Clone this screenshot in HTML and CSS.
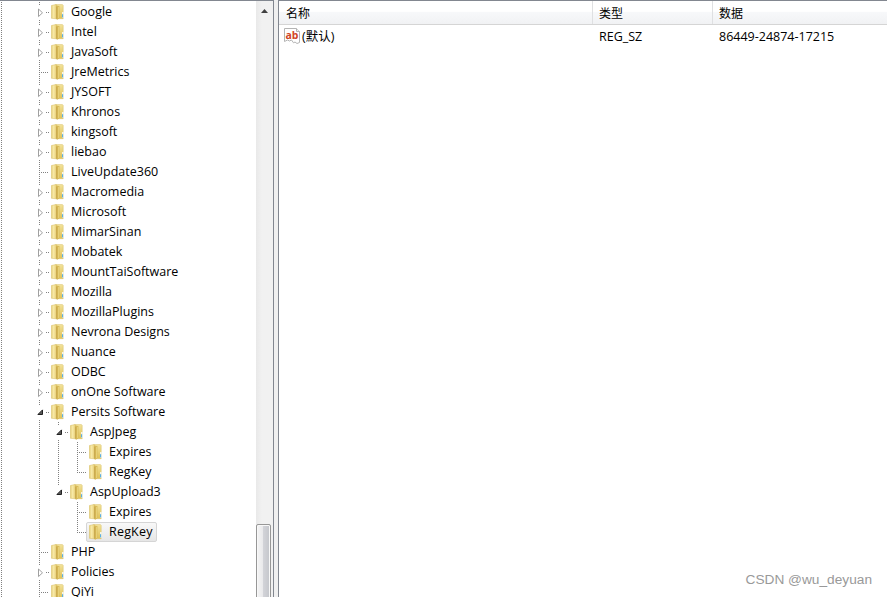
FILE: index.html
```
<!DOCTYPE html>
<html lang="zh-CN">
<head>
    <meta charset="UTF-8">
    <title>Registry Editor</title>
    <link rel="stylesheet" href="styles.css">
</head>
<body>
    <svg class="defs" width="0" height="0">
        <defs>
            <linearGradient id="folderLeft" x1="0" x2="1" y1="0" y2="0">
                <stop offset="0" stop-color="#e6d07a"/>
                <stop offset="0.4" stop-color="#f8eaa9"/>
                <stop offset="1" stop-color="#e2c668"/>
            </linearGradient>
            <linearGradient id="folderRight" x1="0" x2="0" y1="0" y2="1">
                <stop offset="0" stop-color="#f2e29b"/>
                <stop offset="1" stop-color="#dfc156"/>
            </linearGradient>
            <symbol id="folder" viewBox="0 0 14 16">
                <path d="M5 .4h6.3l.9.9v13.4H5z" fill="url(#folderRight)" stroke="#d9c06a" stroke-width=".5"/>
                <path d="M.4 1.6 5 .4l1 1.4v13L.4 14.3z" fill="url(#folderLeft)" stroke="#d6bc62" stroke-width=".5"/>
                <path d="M5 1.8 8.4 2v12l-2 1.8L5 14.6z" fill="#d6b855"/>
                <path d="M5.6 3v11.5" stroke="#c8a850" stroke-width=".9"/>
                <path d="M7.6 2.8v11.2" stroke="#ecd988" stroke-width=".8"/>
                <path d="M11 8h1.8v5.8H11z" fill="#f6f4e4"/>
                <path d="M11.6 10.2v3.2" stroke="#4ba8e2" stroke-width="1"/>
            </symbol>
            <symbol id="closed" viewBox="0 0 7 10">
                <path d="M1.5 1v7.6l4-3.8z" fill="#fff" stroke="#a0a0a0"/>
            </symbol>
            <symbol id="open" viewBox="0 0 7 7">
                <path d="M5.5.9v4.6H.9z" fill="#595959" stroke="#222"/>
            </symbol>
        </defs>
    </svg>

    <div class="window">
        <div class="tree-pane">
            <div class="tree">
                <div class="row"><i class="node"><svg class="closed"><use href="#closed"/></svg></i><span class="item"><svg><use href="#folder"/></svg>Google</span></div>
                <div class="row"><i class="node"><svg class="closed"><use href="#closed"/></svg></i><span class="item"><svg><use href="#folder"/></svg>Intel</span></div>
                <div class="row"><i class="node"><svg class="closed"><use href="#closed"/></svg></i><span class="item"><svg><use href="#folder"/></svg>JavaSoft</span></div>
                <div class="row"><i class="tee"></i><span class="item"><svg><use href="#folder"/></svg>JreMetrics</span></div>
                <div class="row"><i class="node"><svg class="closed"><use href="#closed"/></svg></i><span class="item"><svg><use href="#folder"/></svg>JYSOFT</span></div>
                <div class="row"><i class="node"><svg class="closed"><use href="#closed"/></svg></i><span class="item"><svg><use href="#folder"/></svg>Khronos</span></div>
                <div class="row"><i class="node"><svg class="closed"><use href="#closed"/></svg></i><span class="item"><svg><use href="#folder"/></svg>kingsoft</span></div>
                <div class="row"><i class="node"><svg class="closed"><use href="#closed"/></svg></i><span class="item"><svg><use href="#folder"/></svg>liebao</span></div>
                <div class="row"><i class="tee"></i><span class="item"><svg><use href="#folder"/></svg>LiveUpdate360</span></div>
                <div class="row"><i class="node"><svg class="closed"><use href="#closed"/></svg></i><span class="item"><svg><use href="#folder"/></svg>Macromedia</span></div>
                <div class="row"><i class="node"><svg class="closed"><use href="#closed"/></svg></i><span class="item"><svg><use href="#folder"/></svg>Microsoft</span></div>
                <div class="row"><i class="node"><svg class="closed"><use href="#closed"/></svg></i><span class="item"><svg><use href="#folder"/></svg>MimarSinan</span></div>
                <div class="row"><i class="node"><svg class="closed"><use href="#closed"/></svg></i><span class="item"><svg><use href="#folder"/></svg>Mobatek</span></div>
                <div class="row"><i class="node"><svg class="closed"><use href="#closed"/></svg></i><span class="item"><svg><use href="#folder"/></svg>MountTaiSoftware</span></div>
                <div class="row"><i class="node"><svg class="closed"><use href="#closed"/></svg></i><span class="item"><svg><use href="#folder"/></svg>Mozilla</span></div>
                <div class="row"><i class="node"><svg class="closed"><use href="#closed"/></svg></i><span class="item"><svg><use href="#folder"/></svg>MozillaPlugins</span></div>
                <div class="row"><i class="node"><svg class="closed"><use href="#closed"/></svg></i><span class="item"><svg><use href="#folder"/></svg>Nevrona Designs</span></div>
                <div class="row"><i class="node"><svg class="closed"><use href="#closed"/></svg></i><span class="item"><svg><use href="#folder"/></svg>Nuance</span></div>
                <div class="row"><i class="node"><svg class="closed"><use href="#closed"/></svg></i><span class="item"><svg><use href="#folder"/></svg>ODBC</span></div>
                <div class="row"><i class="node"><svg class="closed"><use href="#closed"/></svg></i><span class="item"><svg><use href="#folder"/></svg>onOne Software</span></div>
                <div class="row"><i class="node"><svg class="open"><use href="#open"/></svg></i><span class="item"><svg><use href="#folder"/></svg>Persits Software</span></div>
                <div class="row"><i class="line"></i><i class="node"><svg class="open"><use href="#open"/></svg></i><span class="item"><svg><use href="#folder"/></svg>AspJpeg</span></div>
                <div class="row"><i class="line"></i><i class="line"></i><i class="tee"></i><span class="item"><svg><use href="#folder"/></svg>Expires</span></div>
                <div class="row"><i class="line"></i><i class="line"></i><i class="elbow"></i><span class="item"><svg><use href="#folder"/></svg>RegKey</span></div>
                <div class="row"><i class="line"></i><i class="node last"><svg class="open"><use href="#open"/></svg></i><span class="item"><svg><use href="#folder"/></svg>AspUpload3</span></div>
                <div class="row"><i class="line"></i><i></i><i class="tee"></i><span class="item"><svg><use href="#folder"/></svg>Expires</span></div>
                <div class="row"><i class="line"></i><i></i><i class="elbow"></i><span class="item selected"><svg><use href="#folder"/></svg>RegKey</span></div>
                <div class="row"><i class="tee"></i><span class="item"><svg><use href="#folder"/></svg>PHP</span></div>
                <div class="row"><i class="node"><svg class="closed"><use href="#closed"/></svg></i><span class="item"><svg><use href="#folder"/></svg>Policies</span></div>
                <div class="row"><i class="tee"></i><span class="item"><svg><use href="#folder"/></svg>QiYi</span></div>
            </div>
            <div class="scrollbar">
                <svg class="arrow" viewBox="0 0 7 4"><path d="M0 4 3.5 0 7 4z" fill="#404040"/></svg>
                <div class="thumb"></div>
            </div>
        </div>

        <div class="list-pane">
            <div class="list-head">
                <span>名称</span>
                <span>类型</span>
                <span>数据</span>
            </div>
            <div class="list-row">
                <span class="name">
                    <svg class="string-icon" viewBox="0 0 16 16">
                        <path d="M.5.5h12l3 3v11l-2.5 1-2-1.5-1.5.8-2-2.8-2 1-2-1-3 1.5z" fill="#fff" stroke="#b4b4b4"/>
                        <path d="M12.5.5v3h3" fill="#eee" stroke="#b4b4b4"/>
                        <text x="1.4" y="10.5">ab</text>
                    </svg>
                    <span>(默认)</span>
                </span>
                <span>REG_SZ</span>
                <span>86449-24874-17215</span>
            </div>
        </div>
    </div>
    <div class="watermark">CSDN @wu_deyuan</div>
</body>
</html>
```
FILE: styles.css
```
:root {
    --border: #828790;
    --dot: #808080;
    --v-dots: repeating-linear-gradient(180deg, var(--dot) 0 1px, transparent 1px 2px);
    --h-dots: repeating-linear-gradient(90deg, var(--dot) 0 1px, transparent 1px 2px);
}

* {
    box-sizing: border-box;
}

body {
    margin: 0;
    height: 597px;
    overflow: hidden;
    background: #fff;
    color: #000;
    font-family: "Open Sans", "Noto Sans CJK SC", sans-serif;
    font-size: 12.5px;
}

.defs {
    position: absolute;
}

.window {
    display: flex;
    height: 597px;
    background: #f0f0f0;
}

/* Key tree */
.tree-pane {
    display: flex;
    width: 274px;
    margin-right: 4px;
    border-top: 1px solid var(--border);
    border-right: 1px solid var(--border);
    background: #fff;
    overflow: hidden;
}

.tree {
    flex: 1;
    padding: 1px 0 0 30px;
    background: var(--v-dots) 1px 1px / 1px 100% no-repeat;
}

.row {
    display: flex;
    height: 20px;
}

.row i {
    flex: none;
    width: 19px;
    height: 20px;
    background-repeat: no-repeat;
}

.row .line {
    background-image: var(--v-dots);
    background-size: 1px 20px;
    background-position: 9px 0;
}

.row .tee,
.row .elbow {
    background-image: var(--v-dots), var(--h-dots);
    background-size: 1px 20px, 11px 1px;
    background-position: 9px 0, 9px 10px;
}

.row .elbow {
    background-size: 1px 11px, 11px 1px;
}

.row .node {
    padding: 6px 0 0 7px;
    background-image: var(--v-dots), var(--v-dots), var(--h-dots);
    background-size: 1px 3px, 1px 2px, 3px 1px;
    background-position: 9px 0, 9px 18px, 16px 10px;
}

.row .last {
    background-size: 1px 3px, 0 0, 3px 1px;
}

.row svg {
    display: block;
}

.row .closed {
    width: 7px;
    height: 10px;
}

.row .open {
    width: 7px;
    height: 7px;
    margin-top: 1px;
}

.item {
    display: flex;
    align-items: center;
    height: 20px;
    padding: 0 3px 0 2px;
    line-height: 20px;
    white-space: nowrap;
}

.item svg {
    width: 14px;
    height: 16px;
    margin-right: 6px;
}

.selected {
    margin-left: -1px;
    padding: 0 3px 0 2px;
    border: 1px solid #d5d5d5;
    border-radius: 2px;
    background: linear-gradient(#f8f8f8, #e6e6e6);
    letter-spacing: 0.2px;
}

.scrollbar {
    width: 17px;
    display: flex;
    flex-direction: column;
    align-items: flex-start;
    background: linear-gradient(90deg, #e9e9e9, #f1f1f1 35%, #f1f1f1);
}

.arrow {
    flex: none;
    width: 7px;
    height: 4px;
    margin: 8px 0 0 5px;
}

.thumb {
    flex: none;
    width: 15px;
    height: 90px;
    margin-top: 511px;
    border: 1px solid #979797;
    border-radius: 2px;
    background: linear-gradient(90deg, #f5f5f5, #e9e9eb 45%, #d2d3d8 50%, #c4c6cb);
    box-shadow: inset 0 0 0 1px #f8f8f8;
}

/* Value list */
.list-pane {
    flex: 1;
    border-top: 1px solid var(--border);
    border-left: 1px solid var(--border);
    background: #fff;
}

.list-head,
.list-row {
    display: grid;
    grid-template-columns: 314px 120px 1fr;
}

.list-head {
    height: 24px;
    border-bottom: 1px solid #d5d5d5;
    background: linear-gradient(#fff 0 45%, #f7f8fa 50%, #f1f2f4);
    font-size: 12px;
    line-height: 25px;
}

.list-head span {
    height: 23px;
    padding-left: 6px;
    border-right: 1px solid #dfe0e2;
}

.list-head span:first-child {
    padding-left: 7px;
}

.list-head span:last-child {
    border-right: 0;
}

.list-row {
    height: 22px;
    line-height: 24px;
}

.list-row > span {
    padding-left: 6px;
}

.list-row .name {
    display: flex;
    padding-left: 5px;
}

.string-icon {
    width: 16px;
    height: 16px;
    margin: 3px 2px 0 0;
}

.string-icon text {
    fill: #d04525;
    font: bold 10.5px "Open Sans", sans-serif;
}

.watermark {
    position: absolute;
    right: 15px;
    bottom: 8px;
    color: #999;
    font: 13.7px/18px "Liberation Sans", sans-serif;
}
```
